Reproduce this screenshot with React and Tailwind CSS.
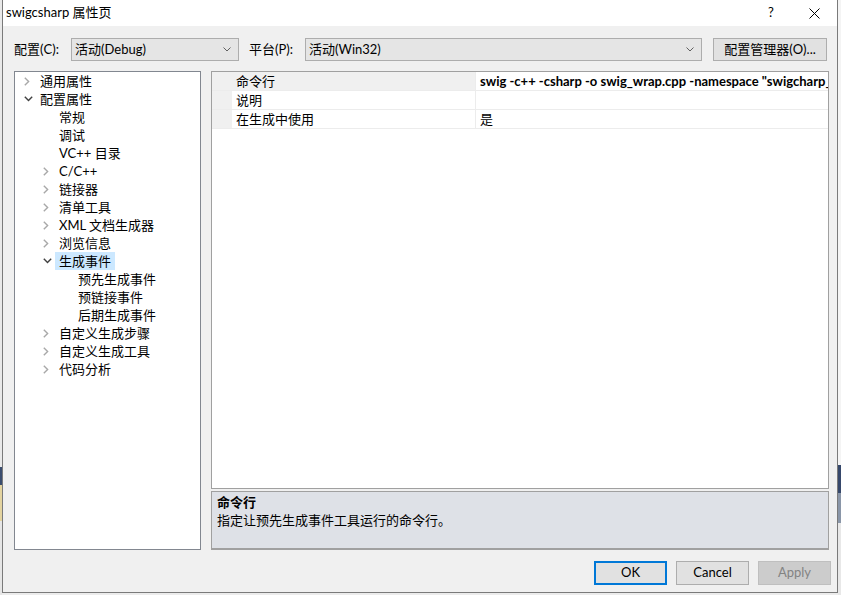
import React from 'react';

const tree = [
  { label: '通用属性', level: 0, arrow: 'closed' },
  { label: '配置属性', level: 0, arrow: 'open' },
  { label: '常规', level: 1 },
  { label: '调试', level: 1 },
  { label: 'VC++ 目录', level: 1 },
  { label: 'C/C++', level: 1, arrow: 'closed' },
  { label: '链接器', level: 1, arrow: 'closed' },
  { label: '清单工具', level: 1, arrow: 'closed' },
  { label: 'XML 文档生成器', level: 1, arrow: 'closed' },
  { label: '浏览信息', level: 1, arrow: 'closed' },
  { label: '生成事件', level: 1, arrow: 'open', selected: true },
  { label: '预先生成事件', level: 2 },
  { label: '预链接事件', level: 2 },
  { label: '后期生成事件', level: 2 },
  { label: '自定义生成步骤', level: 1, arrow: 'closed' },
  { label: '自定义生成工具', level: 1, arrow: 'closed' },
  { label: '代码分析', level: 1, arrow: 'closed' },
];

const props = [
  { name: '命令行', value: 'swig -c++ -csharp -o swig_wrap.cpp -namespace "swigcharp_pod" swig.i', bold: true, active: true },
  { name: '说明', value: '' },
  { name: '在生成中使用', value: '是' },
];

function Chevron({ kind }) {
  if (kind === 'open') {
    return (
      <svg width="9" height="6" viewBox="0 0 9 6">
        <polyline points="0.8,0.8 4.5,4.6 8.2,0.8" fill="none" stroke="#404040" strokeWidth="1.4" />
      </svg>
    );
  }
  return (
    <svg width="6" height="9" viewBox="0 0 6 9">
      <polyline points="0.8,0.8 4.6,4.5 0.8,8.2" fill="none" stroke="#a8a8a8" strokeWidth="1.4" />
    </svg>
  );
}

function DropArrow() {
  return (
    <svg width="8" height="5" viewBox="0 0 8 5">
      <polyline points="0.5,0.5 4,4 7.5,0.5" fill="none" stroke="#606060" strokeWidth="1" />
    </svg>
  );
}

function Select({ value, width }) {
  return (
    <div className={`${width} h-[23px] flex items-center justify-between bg-[#e5e5e5] border border-[#adadad] pl-[3px] pr-[7px]`}>
      <span>{value}</span>
      <DropArrow />
    </div>
  );
}

export default function App() {
  return (
    <div className="w-[841px] h-[595px] flex bg-[#ececec] overflow-hidden text-[13px] text-black font-['Lato','Noto_Sans_CJK_SC',sans-serif]">
      {/* strip of the desktop showing behind the dialog */}
      <div className="w-[2px] flex flex-col">
        <div className="h-[467px] bg-[#e9e9e9]" />
        <div className="h-[18px] bg-[#3b4d6e]" />
        <div className="h-[36px] bg-[#e4d4a0]" />
        <div className="flex-1 bg-[#e6e6e6]" />
      </div>

      <div className="w-[836px] h-[593px] border border-t-0 border-[#7a7a7a] bg-[#f0f0f0] flex flex-col">
        {/* title bar */}
        <div className="h-[26px] bg-white flex items-center pl-[3px]">
          <span className="flex-1">swigcsharp 属性页</span>
          <span className="w-[20px] text-center mr-[10px]">?</span>
          <div className="w-[46px] flex justify-center">
            <svg width="11" height="11" viewBox="0 0 11 11">
              <path d="M0.5 0.5 L10.5 10.5 M10.5 0.5 L0.5 10.5" stroke="#000" strokeWidth="1" />
            </svg>
          </div>
        </div>

        {/* configuration row */}
        <div className="flex items-center mt-[12px] pl-[11px] h-[23px]">
          <span className="w-[57px]">配置(C):</span>
          <Select value="活动(Debug)" width="w-[168px]" />
          <span className="ml-[10px] w-[56px]">平台(P):</span>
          <Select value="活动(Win32)" width="w-[397px]" />
          <div className="ml-[11px] w-[114px] h-[23px] flex items-center justify-center bg-[#e1e1e1] border border-[#adadad]">
            配置管理器(O)...
          </div>
        </div>

        {/* main area */}
        <div className="flex mt-[10px] pl-[11px] h-[479px]">
          <div className="w-[187px] h-full bg-white border border-[#828790]">
            {tree.map((item, i) => (
              <div key={i} className="h-[18px] flex items-center" style={{ paddingLeft: 4 + item.level * 19 }}>
                <div className="w-[17px] flex items-center justify-start pl-[5px]">
                  {item.arrow && <Chevron kind={item.arrow} />}
                </div>
                <span className={`h-[18px] leading-[18px] px-[4px] ${item.selected ? 'bg-[#cce8ff]' : ''}`}>{item.label}</span>
              </div>
            ))}
          </div>

          <div className="ml-[10px] w-[618px] flex flex-col">
            <div className="h-[418px] bg-white border border-[#a0a0a0] flex flex-col">
              {props.map((p, i) => (
                <div key={i} className="flex h-[19px] border-b border-[#ececec]">
                  <div className="w-[20px] bg-[#f0f0f0]" />
                  <div className={`w-[244px] pl-[4px] leading-[18px] border-r border-[#ececec] ${p.active ? 'bg-[#f0f0f0]' : ''}`}>{p.name}</div>
                  <div className={`flex-1 pl-[4px] leading-[18px] whitespace-nowrap overflow-hidden ${p.bold ? 'font-bold' : ''}`}>{p.value}</div>
                </div>
              ))}
              <div className="flex-1 bg-white" />
            </div>
            <div className="mt-[2px] h-[59px] bg-[#dee1e7] border border-[#a0a0a0] border-b-2 pl-[5px] pt-[1px] leading-[18px]">
              <div className="font-bold">命令行</div>
              <div>指定让预先生成事件工具运行的命令行。</div>
            </div>
          </div>
        </div>

        {/* buttons */}
        <div className="flex justify-end gap-[9px] mt-[11px] pr-[6px]">
          <div className="w-[73px] h-[24px] flex items-center justify-center bg-[#e1e1e1] border-2 border-[#0078d7]">OK</div>
          <div className="w-[73px] h-[24px] flex items-center justify-center bg-[#e1e1e1] border border-[#adadad]">Cancel</div>
          <div className="w-[73px] h-[24px] flex items-center justify-center bg-[#cccccc] border border-[#bfbfbf] text-[#838383]">Apply</div>
        </div>
      </div>

      <div className="flex-1 flex flex-col">
        <div className="h-[465px] bg-[#f4f4f4]" />
        <div className="h-[28px] bg-[#36486b]" />
        <div className="h-[30px] bg-[#8a96a8]" />
        <div className="flex-1 bg-[#e8e8e8]" />
      </div>
    </div>
  );
}
